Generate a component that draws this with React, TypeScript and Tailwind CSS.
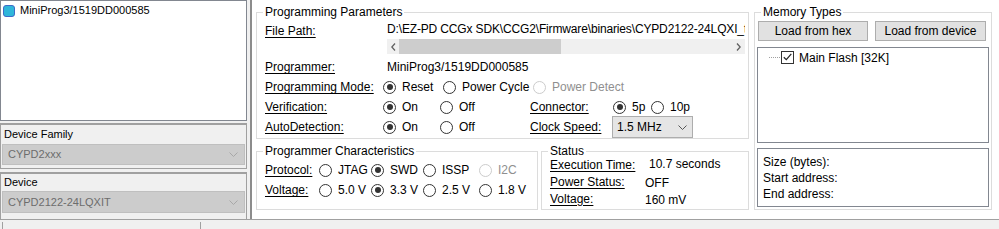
import React from "react";

function Chevron({ color }: { color: string }) {
  return (
    <svg width="9" height="5" viewBox="0 0 9 5" className="shrink-0">
      <path d="M0.5 0.5L4.5 4.5L8.5 0.5" fill="none" stroke={color} strokeWidth="1" />
    </svg>
  );
}

function Radio({ checked = false, disabled = false }: { checked?: boolean; disabled?: boolean }) {
  return (
    <span
      className={
        disabled
          ? "flex h-[13px] w-[13px] shrink-0 items-center justify-center rounded-full border border-[#cccccc] bg-white"
          : "flex h-[13px] w-[13px] shrink-0 items-center justify-center rounded-full border border-[#333333] bg-white"
      }
    >
      {checked && <span className="h-[6px] w-[6px] rounded-full bg-[#333333]" />}
    </span>
  );
}

function Opt({
  label,
  checked = false,
  disabled = false,
  className = "",
}: {
  label: string;
  checked?: boolean;
  disabled?: boolean;
  className?: string;
}) {
  return (
    <div className={"flex shrink-0 items-center gap-[6px] " + className}>
      <Radio checked={checked} disabled={disabled} />
      <span className={disabled ? "text-[#8f8f8f]" : ""}>{label}</span>
    </div>
  );
}

function Lbl({ children, className = "" }: { children: React.ReactNode; className?: string }) {
  return <span className={"shrink-0 underline underline-offset-2 " + className}>{children}</span>;
}

function ScrollArrow({ dir }: { dir: "l" | "r" }) {
  return (
    <svg width="5" height="8" viewBox="0 0 5 8">
      <path
        d={dir === "l" ? "M4 0.5L0.8 4L4 7.5" : "M1 0.5L4.2 4L1 7.5"}
        fill="none"
        stroke="#606060"
        strokeWidth="1.3"
      />
    </svg>
  );
}

export default function App() {
  const path = "D:\\EZ-PD CCGx SDK\\CCG2\\Firmware\\binaries\\CYPD2122-24LQXI_table.cyacd";
  return (
    <div className="flex h-[229px] w-[999px] flex-col overflow-hidden bg-[#f0f0f0] font-['Liberation_Sans',Arial,sans-serif] text-black">
      <div className="flex h-[219px]">
        {/* Left column */}
        <div className="flex w-[247px] shrink-0 flex-col text-[11px] leading-[13px]">
          <div className="h-[121px] border border-[#828790] bg-white">
            <div className="flex items-center gap-[5px] pl-[2px] pt-[3px]">
              <span className="h-[12px] w-[12px] rounded-[3px] border border-[#3d6bc7] bg-[#2fb6da]" />
              <span>MiniProg3/1519DD000585</span>
            </div>
          </div>
          <div className="mt-[2px] h-[46px] border border-t-2 border-[#a0a0a0] pt-[3px]">
            <div className="pl-[3px]">Device Family</div>
            <div className="mx-[1px] mt-[3px] flex h-[21px] items-center justify-between border border-[#bfbfbf] bg-[#cccccc] pl-[5px] pr-[6px] text-[#6d6d6d]">
              <span>CYPD2xxx</span>
              <Chevron color="#a8a8a8" />
            </div>
          </div>
          <div className="mt-[3px] flex-1 border-x border-t-2 border-[#a0a0a0] pt-[2px]">
            <div className="pl-[3px]">Device</div>
            <div className="mx-[1px] mt-[2px] flex h-[22px] items-center justify-between border border-[#bfbfbf] bg-[#cccccc] pl-[5px] pr-[6px] text-[#6d6d6d]">
              <span>CYPD2122-24LQXIT</span>
              <Chevron color="#a8a8a8" />
            </div>
          </div>
        </div>

        {/* Right panel */}
        <div className="ml-[3px] flex flex-1 gap-[5px] border-l-2 border-[#8c8c8c] bg-white pl-[4px] pt-[5px] text-[12px] leading-[14px]">
          <div className="flex w-[493px] shrink-0 flex-col">
            {/* Programming Parameters */}
            <fieldset className="h-[134px] w-[493px] border border-[#dcdcdc]">
              <legend className="ml-[6px] px-[2px] leading-[14px]">Programming Parameters</legend>
              <div className="pl-[8px]">
                <div className="mt-[3px] flex h-[14px]">
                  <Lbl className="w-[118px] pt-[2px]">File Path:</Lbl>
                  <div className="ml-[4px] w-[358px] overflow-hidden whitespace-nowrap tracking-[-0.15px]">{path}</div>
                </div>
                <div className="ml-[122px] mt-[3px] flex h-[15px] w-[358px] items-center bg-[#f0f0f0]">
                  <div className="flex w-[12px] items-center justify-center">
                    <ScrollArrow dir="l" />
                  </div>
                  <div className="h-[15px] w-[162px] bg-[#cdcdcd]" />
                  <div className="flex-1" />
                  <div className="flex w-[14px] items-center justify-center">
                    <ScrollArrow dir="r" />
                  </div>
                </div>
                <div className="mt-[3px] flex h-[20px] items-center">
                  <Lbl className="w-[118px]">Programmer:</Lbl>
                  <span className="ml-[4px]">MiniProg3/1519DD000585</span>
                </div>
                <div className="flex h-[20px] items-center">
                  <Lbl className="w-[118px]">Programming Mode:</Lbl>
                  <Opt label="Reset" checked className="w-[60px]" />
                  <Opt label="Power Cycle" className="w-[90px]" />
                  <Opt label="Power Detect" disabled />
                </div>
                <div className="flex h-[20px] items-center">
                  <Lbl className="w-[118px]">Verification:</Lbl>
                  <Opt label="On" checked className="w-[57px]" />
                  <Opt label="Off" className="w-[90px]" />
                  <Lbl className="w-[83px]">Connector:</Lbl>
                  <Opt label="5p" checked className="w-[38px]" />
                  <Opt label="10p" />
                </div>
                <div className="flex h-[20px] items-center">
                  <Lbl className="w-[118px]">AutoDetection:</Lbl>
                  <Opt label="On" checked className="w-[57px]" />
                  <Opt label="Off" className="w-[90px]" />
                  <Lbl className="w-[82px]">Clock Speed:</Lbl>
                  <div className="flex h-[22px] w-[81px] shrink-0 items-center justify-between border border-[#adadad] bg-[#e5e5e5] pl-[4px] pr-[5px]">
                    <span>1.5 MHz</span>
                    <Chevron color="#555555" />
                  </div>
                </div>
              </div>
            </fieldset>

            <div className="mt-[5px] flex gap-[3px]">
              {/* Programmer Characteristics */}
              <fieldset className="h-[66px] w-[282px] shrink-0 border border-[#dcdcdc]">
                <legend className="ml-[6px] px-[2px] leading-[14px]">Programmer Characteristics</legend>
                <div className="pl-[8px]">
                  <div className="mt-[2px] flex h-[20px] items-center">
                    <Lbl className="w-[54px]">Protocol:</Lbl>
                    <Opt label="JTAG" className="w-[52px]" />
                    <Opt label="SWD" checked className="w-[52px]" />
                    <Opt label="ISSP" className="w-[56px]" />
                    <Opt label="I2C" disabled />
                  </div>
                  <div className="flex h-[20px] items-center">
                    <Lbl className="w-[54px]">Voltage:</Lbl>
                    <Opt label="5.0 V" className="w-[52px]" />
                    <Opt label="3.3 V" checked className="w-[52px]" />
                    <Opt label="2.5 V" className="w-[56px]" />
                    <Opt label="1.8 V" />
                  </div>
                </div>
              </fieldset>

              {/* Status */}
              <fieldset className="h-[66px] flex-1 border border-[#dcdcdc]">
                <legend className="ml-[6px] px-[2px] leading-[14px]">Status</legend>
                <div className="-mt-[2px] pl-[8px]">
                  <div className="flex h-[17px] items-center">
                    <Lbl className="w-[95px]">Execution Time:</Lbl>
                    <span className="ml-[4px] -mt-[2px]">10.7 seconds</span>
                  </div>
                  <div className="flex h-[17px] items-center">
                    <Lbl className="w-[95px]">Power Status:</Lbl>
                    <span className="mt-[2px]">OFF</span>
                  </div>
                  <div className="flex h-[17px] items-center">
                    <Lbl className="w-[95px]">Voltage:</Lbl>
                    <span className="mt-[2px]">160 mV</span>
                  </div>
                </div>
              </fieldset>
            </div>
          </div>

          {/* Memory Types */}
          <fieldset className="h-[205px] w-[238px] shrink-0 border border-[#dcdcdc]">
            <legend className="ml-[6px] px-[2px] leading-[14px]">Memory Types</legend>
            <div className="mt-[2px] flex gap-[7px] pl-[3px]">
              <div className="flex h-[20px] w-[110px] items-center justify-center border border-[#adadad] bg-[#e1e1e1]">
                Load from hex
              </div>
              <div className="flex h-[20px] w-[111px] items-center justify-center border border-[#adadad] bg-[#e1e1e1]">
                Load from device
              </div>
            </div>
            <div className="ml-[2px] mt-[6px] h-[96px] w-[232px] border border-[#828790] bg-white">
              <div className="flex h-[15px] items-center pl-[11px] pt-[3px]">
                <span className="mt-[1px] w-[11px] border-t border-dotted border-[#a0a0a0]" />
                <span className="ml-[1px] flex h-[13px] w-[13px] items-center justify-center border border-[#333333] bg-white">
                  <svg width="9" height="8" viewBox="0 0 9 8">
                    <path d="M0.8 4.2L3.3 6.6L8.3 0.8" fill="none" stroke="#222222" strokeWidth="1.2" />
                  </svg>
                </span>
                <span className="ml-[5px] mt-[2px]">Main Flash [32K]</span>
              </div>
            </div>
            <div className="ml-[2px] mt-[5px] h-[59px] w-[232px] border border-[#828790] pl-[5px] pt-[5px] leading-[16px]">
              <div>Size (bytes):</div>
              <div>Start address:</div>
              <div>End address:</div>
            </div>
          </fieldset>
        </div>
      </div>

      {/* Status bar */}
      <div className="h-[10px] border-t border-[#a0a0a0] pt-[2px]">
        <div className="flex h-full">
          <div className="ml-[2px] w-[198px] border-l border-[#a0a0a0]" />
          <div className="flex-1 border-l border-[#a0a0a0]" />
        </div>
      </div>
    </div>
  );
}
